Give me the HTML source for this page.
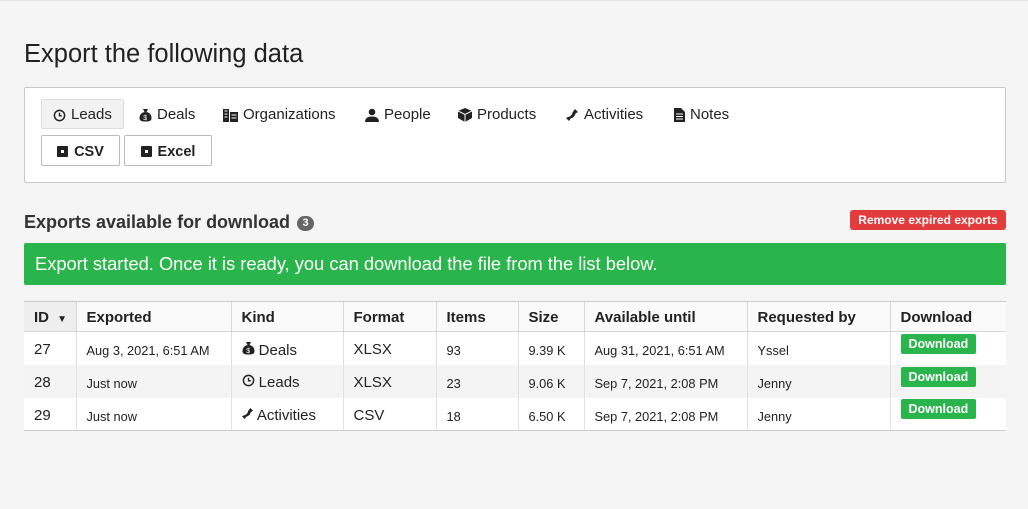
<!DOCTYPE html>
<html><head><meta charset="utf-8"><style>
*{box-sizing:border-box;margin:0;padding:0}
body{width:1028px;height:509px;background:#f5f5f5;font-family:"Liberation Sans","DejaVu Sans",sans-serif;color:#222;position:relative;overflow:hidden;box-shadow:inset 0 1px 0 #e3e3e3}
h1{position:absolute;left:24px;top:40px;font-size:25.5px;font-weight:normal;color:#222}
.panel{position:absolute;left:24px;top:87px;width:982px;height:96px;background:#fff;border:1px solid #c8c8c8;border-radius:2px}
.tab{position:absolute;top:11px;height:30px;line-height:30px;font-size:15px;color:#222;display:flex;align-items:center;gap:5px;padding-top:2px}
.tab.act{background:#f2f2f2;border:1px solid #dedede;border-radius:2px;padding:2px 11px 0}
.btn{position:absolute;top:47px;height:31px;border:1px solid #bbb;border-radius:2px;background:#fff;font-size:14.5px;font-weight:bold;display:flex;align-items:center;justify-content:center;gap:6px;padding-top:2px}
.ico{width:11px;height:11px;background:#222;border-radius:1px;position:relative;display:inline-block}
.ico:after{content:"";position:absolute;left:4px;top:4px;width:3px;height:3px;background:#fff}
h2{position:absolute;left:24px;top:212px;font-size:18px;font-weight:bold;color:#333}
.badge{display:inline-block;width:17px;height:15px;border-radius:8px;background:#666;color:#fff;font-size:11px;text-align:center;line-height:15px;vertical-align:middle;margin-left:2px}
.red{position:absolute;left:850px;top:210px;width:156px;height:20px;background:#e33c3c;color:#fff;border-radius:3px;font-size:12px;font-weight:bold;text-align:center;line-height:20px}
.alert{position:absolute;left:24px;top:243px;width:982px;height:42px;background:#2ab54c;border-radius:2px;color:#fff;font-size:18.3px;line-height:42px;padding-left:11px}
table{position:absolute;left:24px;top:301px;width:982px;border-collapse:collapse;font-size:13px}
th{height:30px;background:#fafafa;font-weight:bold;font-size:15px;text-align:left;padding-left:10px;border-left:1px solid #d6d6d6;border-top:1px solid #ccc;border-bottom:1px solid #d6d6d6;padding-top:2px}
th:first-child{border-left:none;background:#eee}
td{height:33px;padding-left:10px;border-left:1px solid #e0e0e0;font-size:12.8px;padding-top:5px}
td:first-child{border-left:none;font-size:15px;padding-top:3px}
tr.alt td{background:#f4f4f4}
tr.w td{background:#fff}
tbody tr:last-child td{border-bottom:1px solid #ccc}
td.big{font-size:15px;padding-top:3px}
.dl{display:inline-block;background:#2ab54c;color:#fff;font-weight:bold;font-size:12.5px;padding:0 8px;height:20px;line-height:20px;border-radius:2px;position:relative;top:-7px}
</style></head><body>
<h1>Export the following data</h1>
<div class="panel">
 <div class="tab act" style="left:16px">
  <svg width="13" height="13" viewBox="0 0 14 14"><circle cx="7" cy="7" r="5.5" fill="none" stroke="#222" stroke-width="1.6"/><path d="M7 4v3.3h2.5" fill="none" stroke="#222" stroke-width="1.5"/></svg>Leads</div>
 <div class="tab" style="left:114px"><svg width="13" height="14" viewBox="0 0 13 14"><path d="M4 1h5l-1.5 3h-2z M6.5 4c4 0 6 3 6 6s-2 3.5-6 3.5-6-.5-6-3.5 2-6 6-6z" fill="#222"/><text x="4.3" y="12" font-size="7" fill="#fff" font-family="Liberation Sans">$</text></svg>Deals</div>
 <div class="tab" style="left:198px"><svg width="15" height="13" viewBox="0 0 15 13"><rect x="0" y="0" width="6" height="13" fill="#222"/><rect x="7" y="3" width="8" height="10" fill="#222"/><path d="M1.5 2h3M1.5 5h3M1.5 8h3M8.5 6h5M8.5 9h5" stroke="#fff"/></svg>Organizations</div>
 <div class="tab" style="left:340px"><svg width="14" height="14" viewBox="0 0 14 14"><circle cx="7" cy="4" r="3.3" fill="#222"/><path d="M0 14c0-4 3-5.5 7-5.5s7 1.5 7 5.5z" fill="#222"/></svg>People</div>
 <div class="tab" style="left:433px"><svg width="14" height="14" viewBox="0 0 14 14"><path d="M7 0l7 3v7l-7 4-7-4V3z" fill="#222"/><path d="M0 3l7 3.5 7-3.5M7 6.5V14" stroke="#fff" fill="none"/></svg>Products</div>
 <div class="tab" style="left:541px"><svg width="13" height="13" viewBox="0 0 13 13"><path d="M9 0l3 3-2.5 1.5c-.5 2.5-2.5 4.5-5 5L3 12 0 9l2-1c2 0 4.5-2.5 4.5-4.5z" fill="#222"/></svg>Activities</div>
 <div class="tab" style="left:649px"><svg width="11" height="14" viewBox="0 0 11 14"><path d="M0 0h7l4 4v10H0z" fill="#222"/><path d="M2 6h7M2 8.5h7M2 11h7" stroke="#fff"/></svg>Notes</div>
 <div class="btn" style="left:16px;width:79px"><span class="ico"></span>CSV</div>
 <div class="btn" style="left:99px;width:88px"><span class="ico"></span>Excel</div>
</div>
<h2>Exports available for download <span class="badge">3</span></h2>
<div class="red">Remove expired exports</div>
<div class="alert">Export started. Once it is ready, you can download the file from the list below.</div>
<table>
<colgroup><col style="width:52px"><col style="width:155px"><col style="width:112px"><col style="width:93px"><col style="width:82px"><col style="width:66px"><col style="width:163px"><col style="width:143px"><col style="width:116px"></colgroup>
<thead><tr><th>ID <span style="font-size:10px;margin-left:4px">▼</span></th><th>Exported</th><th>Kind</th><th>Format</th><th>Items</th><th>Size</th><th>Available until</th><th>Requested by</th><th>Download</th></tr></thead>
<tbody>
<tr class="w"><td>27</td><td>Aug 3, 2021, 6:51 AM</td><td class="big"><svg width="13" height="14" viewBox="0 0 13 14"><path d="M4 1h5l-1.5 3h-2z M6.5 4c4 0 6 3 6 6s-2 3.5-6 3.5-6-.5-6-3.5 2-6 6-6z" fill="#222"/><text x="4.3" y="12" font-size="7" fill="#fff" font-family="Liberation Sans">$</text></svg> Deals</td><td class="big">XLSX</td><td>93</td><td>9.39 K</td><td>Aug 31, 2021, 6:51 AM</td><td>Yssel</td><td><span class="dl">Download</span></td></tr>
<tr class="alt"><td>28</td><td>Just now</td><td class="big"><svg width="13" height="13" viewBox="0 0 14 14"><circle cx="7" cy="7" r="5.5" fill="none" stroke="#222" stroke-width="1.6"/><path d="M7 4v3.3h2.5" fill="none" stroke="#222" stroke-width="1.5"/></svg> Leads</td><td class="big">XLSX</td><td>23</td><td>9.06 K</td><td>Sep 7, 2021, 2:08 PM</td><td>Jenny</td><td><span class="dl">Download</span></td></tr>
<tr class="w"><td>29</td><td>Just now</td><td class="big"><svg width="12" height="12" viewBox="0 0 13 13"><path d="M9 0l3 3-2.5 1.5c-.5 2.5-2.5 4.5-5 5L3 12 0 9l2-1c2 0 4.5-2.5 4.5-4.5z" fill="#222"/></svg> Activities</td><td class="big">CSV</td><td>18</td><td>6.50 K</td><td>Sep 7, 2021, 2:08 PM</td><td>Jenny</td><td><span class="dl">Download</span></td></tr>
</tbody></table>
</body></html>
